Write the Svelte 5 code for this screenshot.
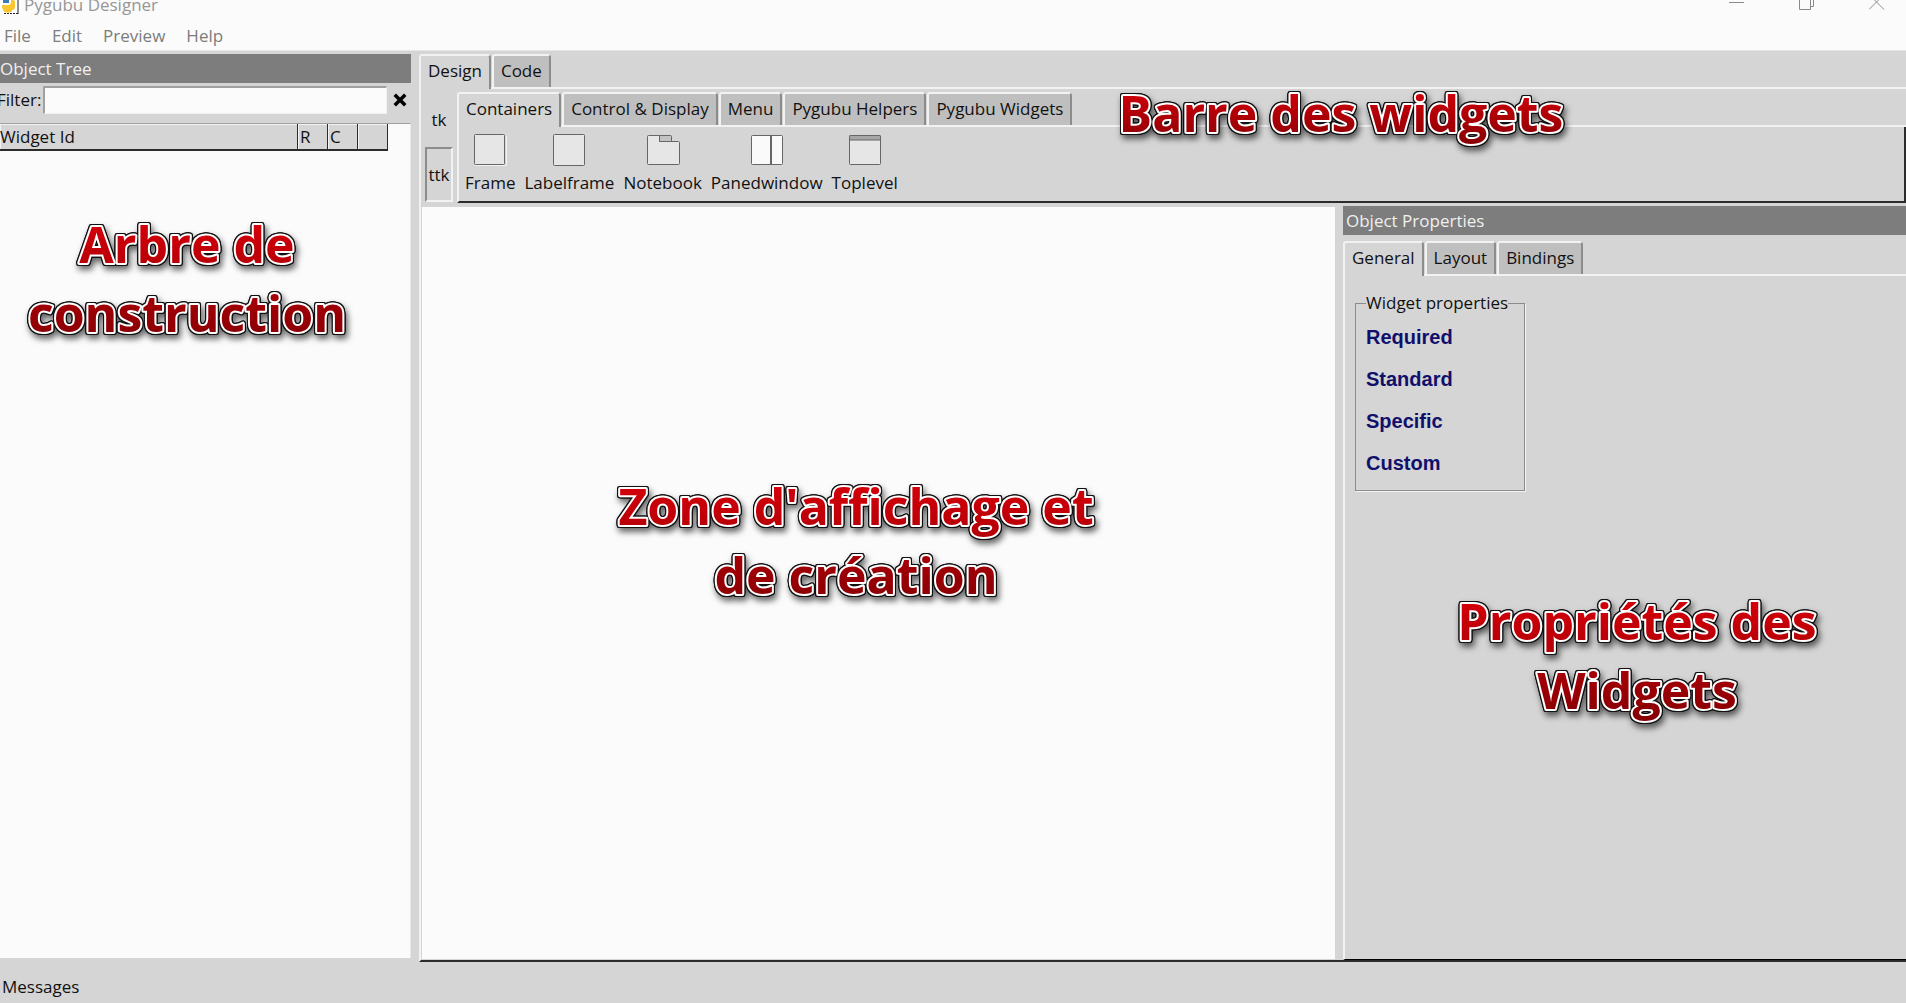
<script lang="ts">

    const menus = ['File', 'Edit', 'Preview', 'Help'];
    const categories = ['Containers', 'Control & Display', 'Menu', 'Pygubu Helpers', 'Pygubu Widgets'];
    const widgets = ['Frame', 'Labelframe', 'Notebook', 'Panedwindow', 'Toplevel'];
    const groups = ['Required', 'Standard', 'Specific', 'Custom'];

    let filter = $state('');
    let view = $state('Design');
    let toolkit = $state('ttk');
    let category = $state('Containers');
    let section = $state('General');

</script>


{#snippet caption(id: string, lines: string[])}
    <svg class="caption {id}" width="560" height={lines.length * 70 + 20} aria-label={lines.join(' ')}>
        <defs>
            <linearGradient id="grad-{id}" gradientUnits="userSpaceOnUse" x1="0" y1="8" x2="0"
                            y2={lines.length * 70}>
                <stop offset="0" stop-color="#d8000a"/>
                <stop offset="1" stop-color="#820004"/>
            </linearGradient>
        </defs>
        <text fill="url(#grad-{id})">
            {#each lines as line, i}
                <tspan x="280" y={54 + i * 69}>{line}</tspan>
            {/each}
        </text>
    </svg>
{/snippet}

{#snippet tab(name: string, current: string, select: (name: string) => void)}
    <button class="tab" class:active={name === current} role="tab" aria-selected={name === current}
            onclick={() => select(name)}>{name}</button>
{/snippet}

<div class="window">
    <header class="titlebar">
        <svg class="logo" width="19" height="24" viewBox="0 0 19 24">
            <path d="M0 0h18v21H0z" fill="#fff"/>
            <path d="M17.500 0h1v21h-1z" fill="#222"/>
            <path d="M3 6h6v4H3z" fill="#3d7ab5"/>
            <path d="M15 9v5q0 3-3 3H6q-4 0-4-3v-2h6q3 0 3-3V7h2q2 0 2 2z" fill="#fbc530"/>
            <path d="M3 16h9q1 3-3 3.500H6q-3-.5-3-3.500z" fill="#fbc530"/>
            <path d="M4 20.500h14" stroke="#222" stroke-dasharray="2 1"/>
        </svg>
        <span class="title">Pygubu Designer</span>
        <div class="controls">
            <button aria-label="Minimize">
                <svg width="16" height="16"><path d="M0 8.500h15" stroke="#8a8a8a"/></svg>
            </button>
            <button aria-label="Restore">
                <svg width="16" height="16" fill="none" stroke="#8a8a8a">
                    <path d="M.5 3.500h11v12H.5zM3.500 3.500v-3h11v12h-3"/>
                </svg>
            </button>
            <button aria-label="Close">
                <svg width="16" height="16" stroke="#8a8a8a"><path d="M0 .500l15 15M15 .500l-15 15"/></svg>
            </button>
        </div>
    </header>

    <nav class="menubar">
        {#each menus as menu}
            <button>{menu}</button>
        {/each}
    </nav>

    <main class="workspace">
        <aside class="tree">
            <h2 class="panel-title">Object Tree</h2>
            <div class="filter">
                <label for="filter">Filter:</label>
                <input id="filter" type="text" bind:value={filter}>
                <button aria-label="Clear filter" onclick={() => filter = ''}>
                    <svg width="14" height="14" viewBox="0 0 14 14">
                        <path d="M3 3l8 8M11 3l-8 8" stroke="#000" stroke-width="3.500" stroke-linecap="square"/>
                    </svg>
                </button>
            </div>
            <div class="tree-view">
                <table>
                    <thead>
                    <tr>
                        <th class="wide">Widget Id</th>
                        <th>R</th>
                        <th>C</th>
                        <th></th>
                    </tr>
                    </thead>
                </table>
                {@render caption('tree-caption', ['Arbre de', 'construction'])}
            </div>
        </aside>

        <section class="editor">
            <div class="tabs" role="tablist">
                {#each ['Design', 'Code'] as name}
                    {@render tab(name, view, (n) => view = n)}
                {/each}
            </div>

            <div class="editor-body">
                <div class="palette">
                    <div class="toolkits">
                        {#each ['tk', 'ttk'] as name}
                            <button class:pressed={name === toolkit} onclick={() => toolkit = name}>{name}</button>
                        {/each}
                    </div>
                    <div class="palette-book">
                        <div class="tabs" role="tablist">
                            {#each categories as name}
                                {@render tab(name, category, (n) => category = n)}
                            {/each}
                        </div>
                        <div class="widgets">
                            {#each widgets as name}
                                <button>
                                    <svg width="34" height="34" fill="#e6e6e6" stroke="#666">
                                        {#if name === 'Notebook'}
                                            <path d="M1.500 3.500q0-1 1-1h11v6h19q1 0 1 1v21q0 1-1 1h-30q-1 0-1-1z"/>
                                            <path d="M13.500 2.500h11q1 0 1 1v5h-12z" fill="#c2c2c2"/>
                                        {:else if name === 'Panedwindow'}
                                            <rect x="1.500" y="2.500" width="31" height="29" rx="1" fill="#fafafa"/>
                                            <path d="M21 3v28" stroke-width="2"/>
                                        {:else if name === 'Toplevel'}
                                            <rect x="1.500" y="2.500" width="31" height="29" rx="1"/>
                                            <path d="M1.500 3.500q0-1 1-1h29q1 0 1 1v3.500h-31z" fill="#a6a6a6"/>
                                        {:else if name === 'Labelframe'}
                                            <rect x="1.500" y="1.500" width="31" height="31" rx="1"/>
                                        {:else}
                                            <path d="M2 32.500h31.500V3" fill="none" stroke="#f2f2f2"/>
                                            <rect x="1.500" y="1.500" width="30" height="30" rx="1"/>
                                        {/if}
                                    </svg>
                                    {name}
                                </button>
                            {/each}
                        </div>
                        {@render caption('palette-caption', ['Barre des widgets'])}
                    </div>
                </div>

                <div class="panes">
                    <div class="canvas">
                        {@render caption('canvas-caption', ["Zone d'affichage et", 'de création'])}
                    </div>

                    <aside class="properties">
                        <h2 class="panel-title">Object Properties</h2>
                        <div class="tabs" role="tablist">
                            {#each ['General', 'Layout', 'Bindings'] as name}
                                {@render tab(name, section, (n) => section = n)}
                            {/each}
                        </div>
                        <div class="properties-body">
                            <fieldset>
                                <legend>Widget properties</legend>
                                {#each groups as name}
                                    <button>{name}</button>
                                {/each}
                            </fieldset>
                            {@render caption('properties-caption', ['Propriétés des', 'Widgets'])}
                        </div>
                    </aside>
                </div>
            </div>
        </section>
    </main>

    <footer>Messages</footer>
</div>


<style>

    :global(body) {
        margin: 0;
        background: #d5d5d5;
    }

    .window {
        --face: #d5d5d5;
        --paper: #fbfbfb;
        --light: #f2f2f2;
        --shade: #8c8c8c;
        --dark: #2c2c2c;

        display: flex;
        flex-direction: column;
        min-height: 100vh;
        overflow: hidden;
        background: var(--face);
        color: #111;
        font: 17px/24px "Open Sans", "Noto Sans", sans-serif;
    }

    button {
        padding: 0;
        border: none;
        background: none;
        color: inherit;
        font: inherit;
    }

    svg {
        display: block;
    }

    .titlebar {
        display: flex;
        align-items: flex-end;
        height: 17px;
        overflow: hidden;
        background: var(--paper);
        color: #969696;
    }

    .logo {
        flex: none;
    }

    .title {
        margin-left: 5px;
    }

    .controls {
        display: flex;
        gap: 54px;
        margin: 0 21px 7px auto;
    }

    .menubar {
        display: flex;
        gap: 21px;
        padding: 7px 4px 2px;
        background: var(--paper);
        border-bottom: 1px solid #e6e6e6;
        color: #7c7c7c;
    }

    .workspace {
        flex: 1;
        display: flex;
        gap: 8px;
        padding-top: 3px;
    }

    .panel-title {
        margin: 0;
        padding: 2px 0;
        background: #7d7d7d;
        color: #f0f0f0;
        font-size: 17px;
        font-weight: 400;
        line-height: 25px;
    }

    .tree {
        flex: none;
        width: 411px;
        display: flex;
        flex-direction: column;
    }

    .filter {
        display: flex;
        align-items: center;
        gap: 2px;
        padding: 3px 0 9px;
    }

    .filter label {
        margin-left: -3px;
    }

    .filter input {
        flex: 1;
        min-width: 0;
        height: 28px;
        box-sizing: border-box;
        padding: 0 4px;
        border: 1px solid var(--light);
        border-top: 2px solid #a0a0a0;
        border-left: 2px solid #a0a0a0;
        background: var(--paper);
        font: inherit;
        outline: none;
    }

    .filter button {
        padding: 0 4px;
    }

    .tree-view {
        position: relative;
        flex: 1;
        margin-bottom: 4px;
        border-top: 1px solid #a0a0a0;
        border-right: 1px solid #e8e8e8;
        background: var(--paper);
    }

    table {
        width: 388px;
        border-collapse: separate;
        border-spacing: 0;
        table-layout: fixed;
    }

    th {
        box-sizing: border-box;
        width: 30px;
        height: 27px;
        padding: 1px 2px 0;
        border: solid var(--dark);
        border-width: 0 1px 2px 0;
        box-shadow: inset 1px 1px var(--light);
        background: var(--face);
        font-weight: 400;
        text-align: left;
        line-height: 24px;
    }

    th.wide {
        width: auto;
        padding-left: 0;
    }

    .editor {
        flex: 1;
        min-width: 0;
        display: flex;
        flex-direction: column;
    }

    .tabs {
        display: flex;
        gap: 1px;
        border-bottom: 2px solid var(--light);
    }

    .tab {
        box-sizing: border-box;
        height: 33px;
        padding: 0 7px 2px;
        border: 2px solid var(--light);
        border-right-color: var(--shade);
        border-bottom: none;
        border-radius: 3px 4px 0 0;
        background: #bfbfbf;
        white-space: nowrap;
    }

    .tab.active {
        height: 35px;
        margin-bottom: -2px;
        padding-bottom: 4px;
        background: var(--face);
    }

    .editor-body {
        flex: 1;
        display: flex;
        flex-direction: column;
        padding-top: 3px;
        border-left: 2px solid var(--light);
        border-bottom: 2px solid var(--dark);
    }

    .palette {
        display: flex;
        gap: 4px;
        padding-left: 4px;
    }

    .toolkits {
        display: flex;
        flex-direction: column;
    }

    .toolkits button {
        box-sizing: border-box;
        width: 28px;
        height: 55px;
        border: 1px solid transparent;
    }

    .toolkits .pressed {
        border: 2px solid var(--light);
        border-top-color: var(--shade);
        border-left-color: var(--shade);
    }

    .palette-book {
        position: relative;
        flex: 1;
        min-width: 0;
    }

    .widgets {
        display: flex;
        gap: 9px;
        padding: 6px 6px;
        border: solid var(--dark);
        border-width: 0 2px 2px 0;
        border-left: 2px solid var(--light);
    }

    .widgets button {
        display: flex;
        flex-direction: column;
        align-items: center;
        gap: 4px;
    }

    .panes {
        flex: 1;
        display: flex;
        gap: 8px;
        padding-top: 3px;
    }

    .canvas {
        position: relative;
        flex: 1;
        margin: 1px 0 1px 1px;
        background: var(--paper);
    }

    .properties {
        flex: none;
        width: 563px;
        display: flex;
        flex-direction: column;
    }

    .properties .panel-title {
        margin-bottom: 6px;
        padding-left: 3px;
    }

    .properties-body {
        position: relative;
        flex: 1;
        padding: 15px 10px;
        border-left: 2px solid var(--light);
        border-bottom: 1px solid #000;
    }

    fieldset {
        display: flex;
        flex-direction: column;
        align-items: flex-start;
        gap: 18px;
        width: 170px;
        box-sizing: border-box;
        margin: 0;
        padding: 10px 10px 15px;
        border: 1px solid var(--shade);
        box-shadow: 1px 1px var(--light);
    }

    legend {
        padding: 0;
        white-space: nowrap;
    }

    fieldset button {
        color: #10106c;
        font: bold 20px/24px "Liberation Sans", Arial, sans-serif;
    }

    footer {
        padding: 13px 2px 4px;
    }

    /* captions laid over the panels */
    .caption {
        position: absolute;
        transform: translateX(-50%);
        overflow: visible;
        pointer-events: none;
        filter: drop-shadow(1px 0 #111) drop-shadow(-1px 0 #111) drop-shadow(0 1px #111) drop-shadow(0 -1px #111) drop-shadow(2px 4px 3px rgba(0, 0, 0, .6));
    }

    .caption text {
        font: 700 50px "Open Sans", "Noto Sans", sans-serif;
        text-anchor: middle;
        stroke: #fff;
        stroke-width: 4px;
        stroke-linejoin: round;
        paint-order: stroke;
    }

    .tree-caption {
        top: 85px;
        left: 187px;
    }

    .palette-caption {
        top: -14px;
        left: 61%;
    }

    .canvas-caption {
        top: 264px;
        left: 47.5%;
    }

    .properties-caption {
        top: 310px;
        left: 52%;
    }

</style>
